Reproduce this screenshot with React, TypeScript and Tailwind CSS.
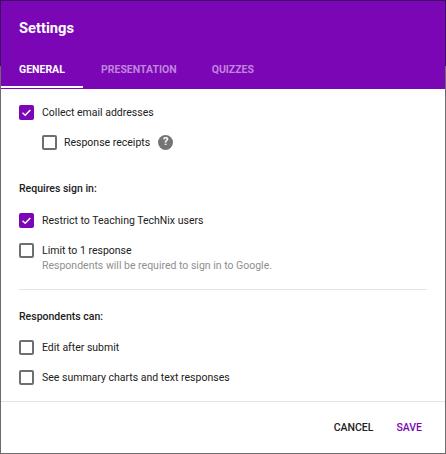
const font = { fontFamily: 'Roboto, sans-serif' };

function Box({ checked }: { checked?: boolean }) {
  if (checked) {
    return (
      <span className="flex h-[15px] w-[15px] shrink-0 items-center justify-center rounded-[2px] bg-[#7b06b5]">
        <svg width="11" height="11" viewBox="0 0 11 11" fill="none">
          <path d="M1.5 5.8 L4.2 8.2 L9.3 3" stroke="#fff" strokeWidth="1.5" />
        </svg>
      </span>
    );
  }
  return <span className="block h-[15px] w-[15px] shrink-0 rounded-[2px] border-2 border-[#6f6f6f] bg-white" />;
}

function Option({ checked, label, className }: { checked?: boolean; label: string; className?: string }) {
  return (
    <div className={`flex h-[15px] items-center gap-[8px] ${className ?? ''}`}>
      <Box checked={checked} />
      <span className="text-[10.5px] leading-[15px] text-[#212121]">{label}</span>
    </div>
  );
}

export default function App() {
  return (
    <div
      style={font}
      className="relative h-[454px] w-[446px] border-b border-l border-r border-[#6b6b6b] bg-white"
    >
      {/* darker purple edge of the dialog shadow, top part only */}
      <span className="absolute left-0 top-0 h-[66px] w-px -translate-x-px bg-[#3d0a63]" />
      <span className="absolute right-0 top-0 h-[66px] w-px translate-x-px bg-[#3d0a63]" />

      <header className="h-[89px] border-t border-[#3d0a63] bg-[#7b06b5]">
        <h1 className="pl-[18px] pt-[17px] text-[14.7px] font-bold leading-[20px] text-white">Settings</h1>
        <nav className="mt-[20px] flex h-[31px] text-[10.5px] font-bold">
          <div className="h-[30px] w-[82px] border-b-[2px] border-white pl-[18px] pt-[2px] leading-[20px] text-white">
            GENERAL
          </div>
          <div className="ml-[18px] pt-[2px] leading-[20px] text-[#c184de]">PRESENTATION</div>
          <div className="ml-[35px] pt-[2px] leading-[20px] text-[#c184de]">QUIZZES</div>
        </nav>
      </header>

      <main className="px-[18px]">
        <Option checked label="Collect email addresses" className="mt-[16px]" />
        <div className="ml-[23px] mt-[15px] flex h-[15px] items-center gap-[7px]">
          <Box />
          <span className="text-[10.5px] leading-[15px] text-[#212121]">Response receipts</span>
          <span className="ml-[1px] flex h-[15px] w-[15px] items-center justify-center rounded-full bg-[#757575] text-[11px] font-bold text-white">
            ?
          </span>
        </div>

        <h2 className="mt-[31px] text-[10.5px] font-medium leading-[15px] text-[#212121]">Requires sign in:</h2>
        <Option checked label="Restrict to Teaching TechNix users" className="mt-[17px]" />
        <Option label="Limit to 1 response" className="mt-[15px]" />
        <p className="ml-[23px] mt-[0px] text-[10.5px] leading-[15px] text-[#8f8f8f]">
          Respondents will be required to sign in to Google.
        </p>
        <div className="mt-[16px] border-t border-[#e3e3e3]" />

        <h2 className="mt-[19px] text-[10.5px] font-medium leading-[15px] text-[#212121]">Respondents can:</h2>
        <Option label="Edit after submit" className="mt-[16px]" />
        <Option label="See summary charts and text responses" className="mt-[15px]" />
      </main>

      <footer className="mt-[16px] flex h-[52px] items-center justify-end gap-[23px] border-t border-[#e3e3e3] pr-[23px] text-[10.5px] font-medium">
        <span className="text-[#212121]">CANCEL</span>
        <span className="text-[#7b06b5]">SAVE</span>
      </footer>
    </div>
  );
}
